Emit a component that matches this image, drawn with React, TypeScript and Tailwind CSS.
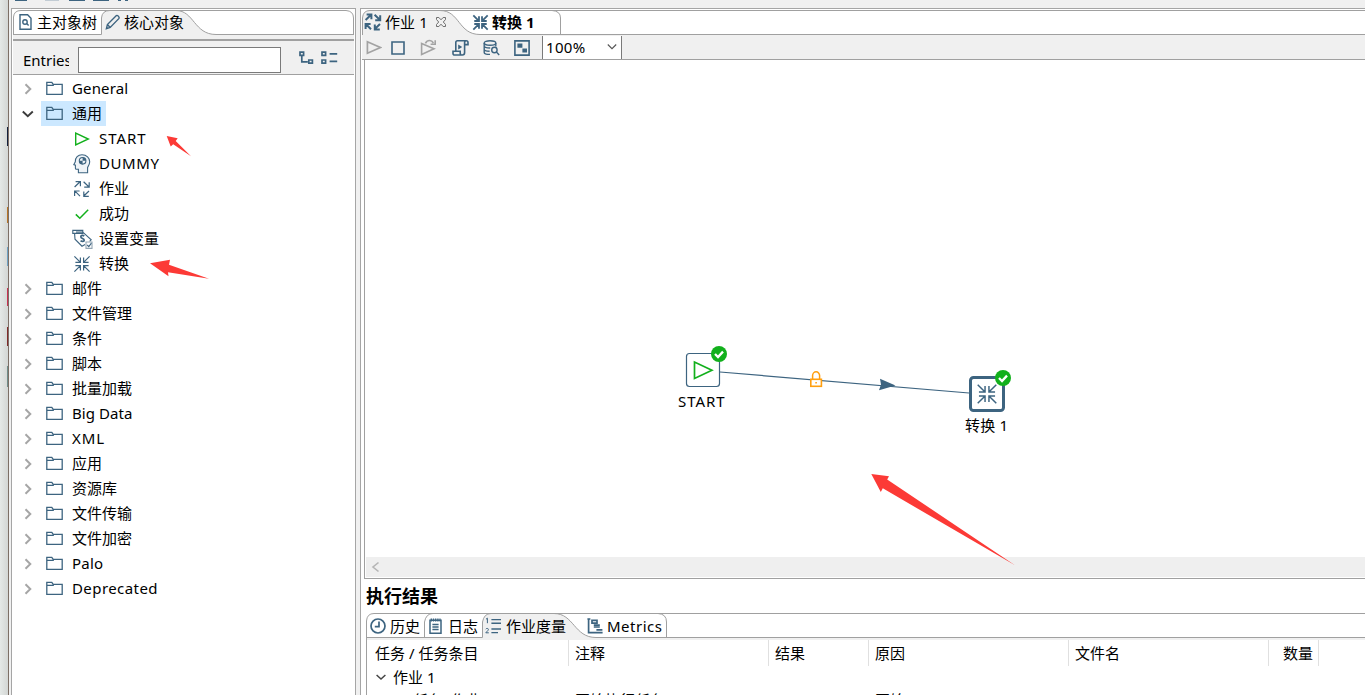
import type { ReactNode } from "react";

const INK = "#3d6480";
const GREEN = "#12b01c";

function Svg({
  w = 16,
  h = 16,
  stroke = INK,
  sw = 1.4,
  children
}: {
  w?: number;
  h?: number;
  stroke?: string;
  sw?: number;
  children: ReactNode;
}) {
  return (
    <svg
      width={w}
      height={h}
      viewBox={`0 0 ${w} ${h}`}
      fill="none"
      stroke={stroke}
      strokeWidth={sw}
      className="shrink-0"
    >
      {children}
    </svg>
  );
}

const Folder = () => (
  <Svg w={17} h={15} sw={1.3}>
    <path d="M.8 13.4V1.4H5.800l1.400 2h9v10zM.8 4.400h6.400V3.400" />
  </Svg>
);

const Chevron = ({ open }: { open?: boolean }) =>
  open ? (
    <Svg w={12} h={12} stroke="#3c3c3c" sw={1.9}>
      <path d="M.8 3.5l5 4.8 5-4.8" />
    </Svg>
  ) : (
    <Svg w={12} h={12} stroke="#a6a6a6" sw={2}>
      <path d="M3.500 1.200l4.800 4.800-4.800 4.800" />
    </Svg>
  );

const Play = () => (
  <Svg w={18} h={16} stroke={GREEN} sw={1.4}>
    <path d="M2.7 2.2v11.6L15.3 8z" />
  </Svg>
);

const Head = () => (
  <Svg w={18} h={20} sw={1.1}>
    <path
      d="M5.400 18.8v-3.600H3.400c-.7 0-1-.4-1-1V11.200L.8 10.600l1.500-2.8C2.200 3.600 5 .8 9 .8c4.600 0 7.700 3 7.700 7 0 2.600-1.100 4-2.100 5.600v5.400z"
      fill="#eef3f7"
    />
    <circle cx="9.6" cy="6.8" r="3.3" />
    <path
      d="M9.6 6.8V3.4a3.4 3.4 0 0 1 3.4 3.4zM9.6 6.8v3.4a3.4 3.4 0 0 1-3.4-3.4z"
      fill={INK}
      stroke="none"
    />
  </Svg>
);

// arrows pointing away from the centre
const Expand = ({ bold }: { bold?: boolean }) => (
  <Svg w={18} h={18} sw={bold ? 2 : 1.2}>
    <path d="M1.600 7l5.200-5M2.600 1.600h4.800v4.600M10.600 1.800l5.200 5M16.200 2.200v5h-5M7 16.200l-5-5M1.600 16v-5h5M16 11l-5.200 5M15.800 16.400h-5v-4.800" />
  </Svg>
);

// arrows pointing at the centre
const Collapse = ({ bold, size = 18 }: { bold?: boolean; size?: number }) => (
  <svg
    width={size}
    height={size}
    viewBox="0 0 18 18"
    fill="none"
    stroke={INK}
    strokeWidth={bold ? 1.9 : 1.2}
    className="shrink-0"
  >
    <path d="M1.4 1.4l5.8 5.8M7.4 2.4v5H2.4M16.6 1.4l-5.8 5.8M10.6 2.4v5h5M1.4 16.6l5.8-5.8M7.4 15.6v-5H2.4M16.6 16.6l-5.8-5.8M10.6 15.6v-5h5" />
  </svg>
);

const Check = () => (
  <Svg w={18} h={18} stroke={GREEN} sw={1.5}>
    <path d="M2.8 9.4l4 3.8 8.4-8.4" />
  </Svg>
);

const Variable = () => (
  <Svg w={21} h={20} sw={1.1}>
    <path d="M.8 1.400h10v3H.8zM2.600 4.600l.4 5.600 7 7 3-1.600M10.800 3.200l8.400 7.600-1.600 1.600M4 3h7" />
    <path d="M12.200 7.200C11 5.900 8.800 6.200 8.800 7.800c0 2 3.400 1.400 3.400 3.400 0 1.500-2.300 1.700-3.600.4" strokeWidth={1.7} />
    <path d="M14 13h6v6.400h-6z" fill="#fff" stroke="#93a5b3" />
    <path d="M15.200 16l1.600 1.600 2.600-3.400" />
  </Svg>
);

const DocSearch = () => (
  <Svg w={13} h={16} sw={1.4}>
    <path d="M1 .8h7.6L12 4.2v11H1z" />
    <circle cx="6" cy="8" r="2.2" />
    <path d="M7.6 9.6l2 2" />
  </Svg>
);

const Pencil = () => (
  <Svg w={16} h={16} sw={1.4}>
    <path d="M1.4 14.6l1-4L11.4 1.6c1-.8 3.4 1.4 2.6 2.8l-8.8 9zM2.4 10.6l2.8 2.8" />
  </Svg>
);

const CloseX = () => (
  <Svg w={12} h={12} stroke="#6f6f6f" sw={1}>
    <path d="M1.5 1.5h2.4L6 3.8l2.1-2.3h2.4v2L8.3 6l2.2 2.5v2H8.1L6 8.2l-2.1 2.3H1.5v-2L3.7 6 1.5 3.5z" />
  </Svg>
);

const ToolRun = () => (
  <Svg w={16} h={15} stroke="#a3a3a3" sw={1.7}>
    <path d="M1.4 1.8v11.4l13-5.7z" />
  </Svg>
);

const ToolStop = () => (
  <Svg w={14} h={14} sw={1.6}>
    <path d="M1 1h12v12H1z" />
  </Svg>
);

const ToolReplay = () => (
  <Svg w={17} h={17} stroke="#a3a3a3" sw={1.6}>
    <path d="M1.6 4.400v11l12.400-5.600zM5.400 4.400C7.400.6 11.600.8 13.400 4M15.200 1.200v4h-4.600" />
  </Svg>
);

const ToolScript = () => (
  <Svg w={17} h={16} sw={1.6}>
    <path d="M3.800 10.600V2.400c0-1 .6-1.600 1.600-1.600h8.400M12.600 2.600v10c0 1.600-.8 2.400-2.200 2.400H2.600c-1 0-1.600-.6-1.600-1.400v-2.400h7.200v2.200c0 .8.600 1.200 1.200 1.200M12.600 2.600c0-2.400 3.400-2.400 3.400 0v2h-3.400" />
    <path d="M6.2 4.6v5l4-2.500z" fill={INK} stroke="none" />
  </Svg>
);

const ToolDb = () => (
  <Svg w={17} h={16} sw={1.4}>
    <ellipse cx="7" cy="3" rx="5.8" ry="2.2" />
    <path d="M1.2 3v9.4c0 1 2.4 2 5.8 2M12.8 3v3.6M1.2 6c0 1.2 2.4 2 6 2M1.2 9.2c0 1.2 2.4 2 5.4 2" />
    <circle cx="11.4" cy="10" r="2.7" />
    <path d="M13.4 12l2.8 3" />
  </Svg>
);

const ToolGrid = () => (
  <Svg w={16} h={16} sw={1.6}>
    <path d="M.9.9h14.2v14.2H.9z" />
    <path d="M3.4 3.4h5v4.4h-5zM8.4 8.4h4.6v4.2H8.4z" fill={INK} stroke="none" />
  </Svg>
);

const TreeExpand = () => (
  <Svg w={15} h={14} sw={1.7}>
    <path d="M1 1.2h3.6v3.2H1zM9.8 9h3.6v3.2H9.8zM2.8 5v5.8h6" />
  </Svg>
);

const TreeCollapse = () => (
  <Svg w={17} h={14} sw={1.7}>
    <path d="M1 1.2h3.6v3.2H1zM1 9h3.6v3.2H1zM8.600 2.8h7.6M8.6 10.4h7.6" />
  </Svg>
);

const Clock = () => (
  <Svg w={16} h={16} sw={1.7}>
    <circle cx="8" cy="8" r="7" />
    <path d="M9 3.6v5H4.8" />
  </Svg>
);

const Notepad = () => (
  <Svg w={13} h={16} sw={1.5}>
    <path d="M1 2.2h11v13H1z" />
    <path d="M1.6 2h10" strokeWidth={3} strokeDasharray="1.4 .8" />
    <path d="M3.4 6.4h6.2M3.4 9h6.2M3.4 11.6h6.2" />
  </Svg>
);

const NumberList = () => (
  <Svg w={17} h={18} sw={1.4}>
    <path d="M6.4 2.6H16M6.4 6.2H16M6.4 12h9.6M6.4 15.6H13" />
    <path d="M1 2.2l1.4-1v5M.8 12.2c.4-1.2 2.8-1 2.6.4-.2 1-1.6 1.8-2.6 3.2h3" strokeWidth={1} />
  </Svg>
);

const Gantt = () => (
  <Svg w={16} h={16} sw={1.7}>
    <path d="M.4 1h3M1.6 1v13.6h14M5 2.4h5v2.8H5zM6.8 7.2h6M6.8 9h6M9.4 11.8h6" />
  </Svg>
);

type Entry = { label: string; icon?: ReactNode; open?: boolean; spacing?: string };

const entries: Entry[] = [
  { label: "General", spacing: "tracking-[0.15px]" },
  { label: "通用", open: true },
  { label: "START", icon: <Play />, spacing: "tracking-[0.95px]" },
  { label: "DUMMY", icon: <Head />, spacing: "tracking-[0.6px]" },
  { label: "作业", icon: <Expand /> },
  { label: "成功", icon: <Check /> },
  { label: "设置变量", icon: <Variable /> },
  { label: "转换", icon: <Collapse /> },
  { label: "邮件" },
  { label: "文件管理" },
  { label: "条件" },
  { label: "脚本" },
  { label: "批量加载" },
  { label: "Big Data", spacing: "tracking-[0.05px]" },
  { label: "XML", spacing: "tracking-[0.9px]" },
  { label: "应用" },
  { label: "资源库" },
  { label: "文件传输" },
  { label: "文件加密" },
  { label: "Palo", spacing: "tracking-[0.2px]" },
  { label: "Deprecated", spacing: "tracking-[0.42px]" }
];

function TreeRow({ label, icon, open, spacing = "" }: Entry) {
  if (icon) {
    return (
      <li className="flex h-[25px] items-center pl-[58px]">
        <span className="flex w-[22px] justify-center">{icon}</span>
        <span className={`pb-px pl-[6px] ${spacing}`}>{label}</span>
      </li>
    );
  }
  return (
    <li className="flex h-[25px] items-center pl-[9px]">
      <Chevron open={open} />
      <span
        className={`ml-[7px] flex h-full items-center gap-2 pr-1 pl-[5px] ${open ? "bg-[#cce8ff]" : ""}`}
      >
        <Folder />
        <span className={`pb-px pl-px ${spacing}`}>{label}</span>
      </span>
    </li>
  );
}

function SidePanel() {
  return (
    <aside className="flex w-[345px] shrink-0 flex-col border-x border-t border-[#a5a5a5] bg-white px-px pt-px">
      <div className="relative flex h-[25px] shrink-0 items-center pb-px">
        <svg className="absolute inset-0" width="341" height="31" fill="none" stroke="#a0a0a0">
          <path d="M.5 31V7Q1 .5 8 .5H333Q340.5 1 340.5 8V31z" fill="#fff" />
          <path d="M0 25H341V31H0z" fill="#f0f0f0" stroke="none" />
          <path d="M88.5 25V8Q89 .5 97 .5H163C181 .5 181 24.5 203 24.5V26H88.5z" fill="#f0f0f0" stroke="none" />
          <path d="M.5 24.5H88.5V8Q89 .5 97 .5H163C181 .5 181 24.5 203 24.5H340.5V31" />
        </svg>
        <div className="relative flex items-center pl-[6px]">
          <DocSearch />
          <span className="w-[67px] pl-[5px] whitespace-nowrap">主对象树</span>
          <span className="pl-[6px]">
            <Pencil />
          </span>
          <span className="pl-[3px] whitespace-nowrap">核心对象</span>
        </div>
      </div>
      <div className="z-10 h-[6px] shrink-0 border-b-2 border-[#a0a0a0] bg-[#f0f0f0]" />
      <div className="flex h-[34px] shrink-0 items-center border-b border-[#a0a0a0] bg-[#f0f0f0] pl-[10px]">
        <span className="w-[46px] overflow-hidden pt-[5px]">Entries:</span>
        <input className="mt-[5px] ml-[9px] h-[26px] w-[203px] border border-[#7a7a7a] bg-white" />
        <span className="mt-px ml-[18px] flex gap-[7px]">
          <TreeExpand />
          <TreeCollapse />
        </span>
      </div>
      <ul className="pt-px">
        {entries.map((entry) => (
          <TreeRow key={entry.label} {...entry} />
        ))}
      </ul>
    </aside>
  );
}

function EditorTabs() {
  return (
    <div className="relative flex h-[25px] shrink-0 items-center pb-px">
      <svg className="absolute inset-0" width="1004" height="25" fill="none" stroke="#a0a0a0">
        <path d="M.5 25V8Q1 .5 8 .5H78C98 .5 96 24.5 118 24.5V26H.5z" fill="#f0f0f0" stroke="none" />
        <path d="M.5 25V8Q1 .5 8 .5H1004M78 .5C98 .5 96 24.5 118 24.5H1004M190 .5Q198.5 1 198.5 8V24.5" />
      </svg>
      <div className="relative flex items-center pl-[2px] whitespace-nowrap">
        <Expand bold />
        <span className="w-[53px] pl-[3px] tracking-[0.1px]">作业 1</span>
        <CloseX />
        <span className="pl-[25px]">
          <Collapse bold size={17} />
        </span>
        <span className="pl-[3px] text-[15px] font-bold">转换 1</span>
      </div>
    </div>
  );
}

function Toolbar() {
  return (
    <div className="flex h-[25px] shrink-0 items-center border-b border-[#a0a0a0] bg-[#f0f0f0] pt-px pl-[4px]">
      <ToolRun />
      <span className="pl-[9px]"><ToolStop /></span>
      <span className="pl-[15px]"><ToolReplay /></span>
      <span className="pl-[15px]"><ToolScript /></span>
      <span className="pl-[14px]"><ToolDb /></span>
      <span className="pl-[14px]"><ToolGrid /></span>
      <div className="ml-3 flex h-full w-[80px] items-center justify-between border-x border-[#7a7a7a] bg-white pr-1 pb-px pl-[3px]">
        <span className="tracking-[0.3px]">100%</span>
        <Svg w={10} h={8} stroke="#555" sw={1.1}>
          <path d="M.8 1.5l4.2 4.2 4.2-4.2" />
        </Svg>
      </div>
    </div>
  );
}

const Badge = ({ cx, cy }: { cx: number; cy: number }) => (
  <g>
    <circle cx={cx} cy={cy} r="8" fill={GREEN} />
    <path d={`M${cx - 4} ${cy}l3 3 5-5.4`} fill="none" stroke="#fff" strokeWidth="2.3" />
  </g>
);

function Canvas() {
  return (
    <div className="relative h-[497px] shrink-0 border-l border-[#a0a0a0] bg-white">
      <svg className="absolute inset-0" width="1000" height="497" viewBox="365 60 1000 497" fill="none">
        <path d="M720 372L969 393" stroke={INK} strokeWidth="1.2" />
        <path d="M880 378.8L895.5 385.5 879 390.2 881 384.5z" fill={INK} />
        <rect x="686.5" y="353.5" width="33" height="33" rx="3" fill="#fff" stroke={INK} strokeWidth="1.2" />
        <path d="M694.5 362v16.4l17.4-8.2z" stroke={GREEN} strokeWidth="1.7" />
        <Badge cx={719} cy={354} />
        <rect x="810.8" y="379.3" width="10.6" height="7" fill="#fff" stroke="#ff9f0f" strokeWidth="1.6" />
        <path d="M812.6 379v-3.4a3.5 3.8 0 0 1 7 0v3.4" stroke="#ff9f0f" strokeWidth="1.5" />
        <path d="M815.3 382h1.6v1.6h-1.6z" fill="#ff9f0f" />
        <rect x="970.5" y="377.5" width="33" height="33" rx="3" fill="#fff" stroke={INK} strokeWidth="3" />
        <g transform="translate(976 383)">
          <Collapse size={22} />
        </g>
        <Badge cx={1003} cy={378} />
      </svg>
      <span className="absolute top-[331px] left-[313px] leading-5 tracking-[0.95px]">START</span>
      <span className="absolute top-[355px] left-[600px] leading-5 tracking-[0.2px]">转换 1</span>
    </div>
  );
}

const columns = [
  { title: "任务 / 任务条目", width: "w-[202px] pl-[8px]" },
  { title: "注释", width: "w-[200px] pl-[6px]" },
  { title: "结果", width: "w-[100px] pl-[6px]" },
  { title: "原因", width: "w-[200px] pl-[6px]" },
  { title: "文件名", width: "w-[200px] pl-[6px]" },
  { title: "数量", width: "w-[50px] pl-[14px]" }
];

function Results() {
  return (
    <section className="flex min-h-0 flex-1 flex-col pl-[2px]">
      <h2 className="h-[34px] shrink-0 text-[18px] leading-[35px] font-bold">执行结果</h2>
      <div className="relative flex h-[25px] shrink-0 items-center">
        <svg className="absolute inset-0" width="1000" height="25" fill="none" stroke="#a0a0a0">
          <path d="M116.5 25V9Q118 .5 125 .5H188C208 .5 208 24.5 230 24.5V26H116.5z" fill="#f0f0f0" stroke="none" />
          <path d="M.5 82V8Q1 .5 8 .5H1000M.5 24.5H116.5V9Q118 .5 125 .5M58.5 24.5V9Q60 .5 67 .5M188 .5C208 .5 208 24.5 230 24.5H1000M292 .5Q300.5 1 300.5 9V24.5" />
        </svg>
        <div className="relative flex items-center pl-[4px] whitespace-nowrap">
          <Clock />
          <span className="w-[43px] pl-[4px]">历史</span>
          <Notepad />
          <span className="w-[43px] pl-[6px]">日志</span>
          <NumberList />
          <span className="w-[83px] pl-[4px]">作业度量</span>
          <span className="ml-[2px]"><Gantt /></span>
          <span className="pl-[4px] tracking-[0.5px]">Metrics</span>
        </div>
      </div>
      <div className="flex min-h-0 flex-1 flex-col overflow-hidden border-l border-[#a0a0a0]">
        <div className="h-[2px] shrink-0 bg-[#f0f0f0]" />
        <div className="flex h-[26px] shrink-0">
          {columns.map((column) => (
            <span
              key={column.title}
              className={`${column.width} shrink-0 border-r border-[#e0e0e0] leading-[27px]`}
            >
              {column.title}
            </span>
          ))}
        </div>
        <div className="flex h-[22px] shrink-0 items-center pl-[9px]">
          <Svg w={10} h={8} stroke="#444" sw={1.5}>
            <path d="M.6 2l4.400 4 4.400-4" />
          </Svg>
          <span className="pl-[7px]">作业 1</span>
        </div>
        <div className="flex h-[24px] shrink-0 items-center">
          <span className="w-[208px] pl-[46px]">任务: 作业 1</span>
          <span className="w-[300px]">开始执行任务</span>
          <span>开始</span>
        </div>
      </div>
    </section>
  );
}

function Annotations() {
  return (
    <svg className="pointer-events-none absolute inset-0 z-20" width="1365" height="695" fill="#fc3a36">
      <path d="M166.700 136l11 2.300-2 2.700L191 156.300l-17.800-12-2.500 2.200z" />
      <path d="M150 263.300l20-3.600-1 5 40 14-41-6.400.5 4z" />
      <path d="M871.300 474l17.700 2.300-1.800 3.200L1015 565.300l-132.200-77-2 3.700z" />
    </svg>
  );
}

// slivers of the windows that sit behind the left edge
const slivers = [
  { top: 127, height: 19, color: "#15213c" },
  { top: 207, height: 16, color: "#b67529" },
  { top: 247, height: 19, color: "#70a2c3" },
  { top: 288, height: 18, color: "#c73453" },
  { top: 327, height: 19, color: "#802c2b" },
  { top: 366, height: 21, color: "#718d8a" }
];

export default function App() {
  return (
    <div className="relative flex h-[695px] w-[1365px] overflow-hidden bg-[#f0f0f0] font-['Noto_Sans','Noto_Sans_CJK_SC',sans-serif] text-[15px] leading-5 text-black">
      <div className="relative w-[9px] shrink-0 border-r border-[#7c6f66] bg-linear-to-r from-[#e5e9e7] to-[#d3d6d4]">
        {slivers.map((s) => (
          <i
            key={s.top}
            className="absolute right-0 w-px"
            style={{ top: s.top, height: s.height, background: s.color }}
          />
        ))}
      </div>
      <div className="flex min-w-0 flex-1 flex-col pl-[2px]">
        <div className="flex h-[8px] shrink-0 items-start">
          <span className="ml-[4px] h-px w-3 bg-[#3d6480]" />
          <span className="ml-[18px] h-px w-[14px] bg-[#c2ccd4]" />
          <span className="ml-[10px] h-px w-4 bg-[#3d6480]" />
          <span className="ml-[8px] h-px w-4 bg-[#3d6480]" />
          <span className="ml-[9px] h-px w-[3px] bg-[#3d6480]" />
          <span className="ml-[4px] h-px w-[3px] bg-[#3d6480]" />
        </div>
        <div className="flex min-h-0 flex-1">
          <SidePanel />
          <main className="ml-[4px] flex min-w-0 flex-1 flex-col border-t border-l border-[#a5a5a5] bg-white pt-px pl-px">
            <EditorTabs />
            <Toolbar />
            <div className="flex min-h-0 flex-1 flex-col pl-[2px]">
              <Canvas />
              <div className="h-[22px] shrink-0 border-b border-l border-[#a0a0a0] pl-px">
                <div className="flex h-[20px] items-center bg-[#efefef] pl-[5px]">
                  <Svg w={9} h={12} stroke="#b5b5b5" sw={1.6}>
                    <path d="M7.5 1.500L2 6l5.5 4.500" />
                  </Svg>
                </div>
              </div>
              <Results />
            </div>
          </main>
        </div>
      </div>
      <Annotations />
    </div>
  );
}
